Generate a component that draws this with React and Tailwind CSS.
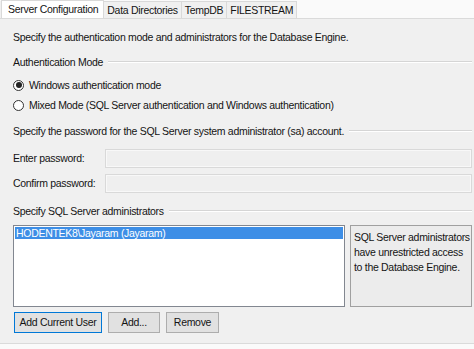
import React from 'react';

// SQL Server setup — Database Engine Configuration, "Server Configuration" tab

const tabs = ['Server Configuration', 'Data Directories', 'TempDB', 'FILESTREAM'];

function GroupTitle({ children, className = '' }) {
  return (
    <div className={`flex items-center gap-[5px] ${className}`}>
      <span className="whitespace-nowrap">{children}</span>
      <div className="flex-1 h-[2px] border-t border-[#d5d5d5] border-b border-b-white" />
    </div>
  );
}

function Radio({ checked, label }) {
  return (
    <div className="flex items-center gap-[5px] h-[20px]">
      <span className="w-[11px] h-[11px] rounded-full border border-[#333] bg-white flex items-center justify-center">
        {checked && <span className="w-[6px] h-[6px] rounded-full bg-[#222]" />}
      </span>
      <span>{label}</span>
    </div>
  );
}

function Field({ label }) {
  return (
    <div className="flex items-center h-[19px]">
      <span className="w-[92px] whitespace-nowrap">{label}</span>
      <div className="flex-1 h-[19px] border border-[#d9d9d9] bg-[#efefef] shadow-[inset_0_0_0_1px_#f8f8f8]" />
    </div>
  );
}

function Btn({ children, primary, className = '' }) {
  return (
    <button
      className={`h-[21px] bg-[#e1e1e1] border ${primary ? 'border-[#0078d7]' : 'border-[#adadad]'} whitespace-nowrap ${className}`}
    >
      {children}
    </button>
  );
}

export default function App() {
  return (
    <div
      className="w-[474px] h-[349px] bg-[#fafafa] text-[#141414] text-[10.5px] tracking-[-0.3px] leading-none overflow-hidden"
      style={{ fontFamily: '"Liberation Sans", Arial, sans-serif' }}
    >
      {/* tab strip */}
      <div className="flex items-end h-[18px]">
        <div className="w-[1px] h-[17px] bg-[#f0f0f0]" />
        {tabs.map((t, i) => (
          <div
            key={t}
            className={
              i === 0
                ? 'h-[18px] pl-[6px] pr-[5px] flex items-center bg-white border border-b-0 border-[#d9d9d9]'
                : 'h-[17px] px-[3px] flex items-center bg-[#f0f0f0] border border-b-0 border-l-0 border-[#d9d9d9]'
            }
          >
            {t}
          </div>
        ))}
      </div>

      {/* page */}
      <div className="h-[326px] bg-[#f0f0f0] border-t border-b border-[#dadada] pl-[13px] pr-[2px] flex flex-col">
        <div className="mt-[13px]">Specify the authentication mode and administrators for the Database Engine.</div>

        <GroupTitle className="mt-[14px]">Authentication Mode</GroupTitle>
        <div className="mt-[8px]">
          <Radio checked label="Windows authentication mode" />
          <Radio label="Mixed Mode (SQL Server authentication and Windows authentication)" />
        </div>

        <GroupTitle className="mt-[11px]">Specify the password for the SQL Server system administrator (sa) account.</GroupTitle>
        <div className="mt-[12px] flex flex-col gap-[6px]">
          <Field label="Enter password:" />
          <Field label="Confirm password:" />
        </div>

        <GroupTitle className="mt-[13px]">Specify SQL Server administrators</GroupTitle>
        <div className="mt-[9px] flex gap-[5px] h-[82px]">
          <div className="w-[332px] bg-white border border-[#828790] p-[1px]">
            <div className="h-[12px] bg-[#3d8ee6] text-white flex items-center pl-[1px]">HODENTEK8\Jayaram (Jayaram)</div>
          </div>
          <div className="flex-1 bg-[#ececec] border border-[#a0a0a0] pl-[3px] pt-[4px] leading-[15px] whitespace-nowrap">
            SQL Server administrators<br />
            have unrestricted access<br />
            to the Database Engine.
          </div>
        </div>

        <div className="mt-[5px] flex gap-[6px] pl-[1px]">
          <Btn primary className="w-[88px]">Add Current User</Btn>
          <Btn className="w-[52px]">Add...</Btn>
          <Btn className="w-[53px]">Remove</Btn>
        </div>
      </div>
    </div>
  );
}
